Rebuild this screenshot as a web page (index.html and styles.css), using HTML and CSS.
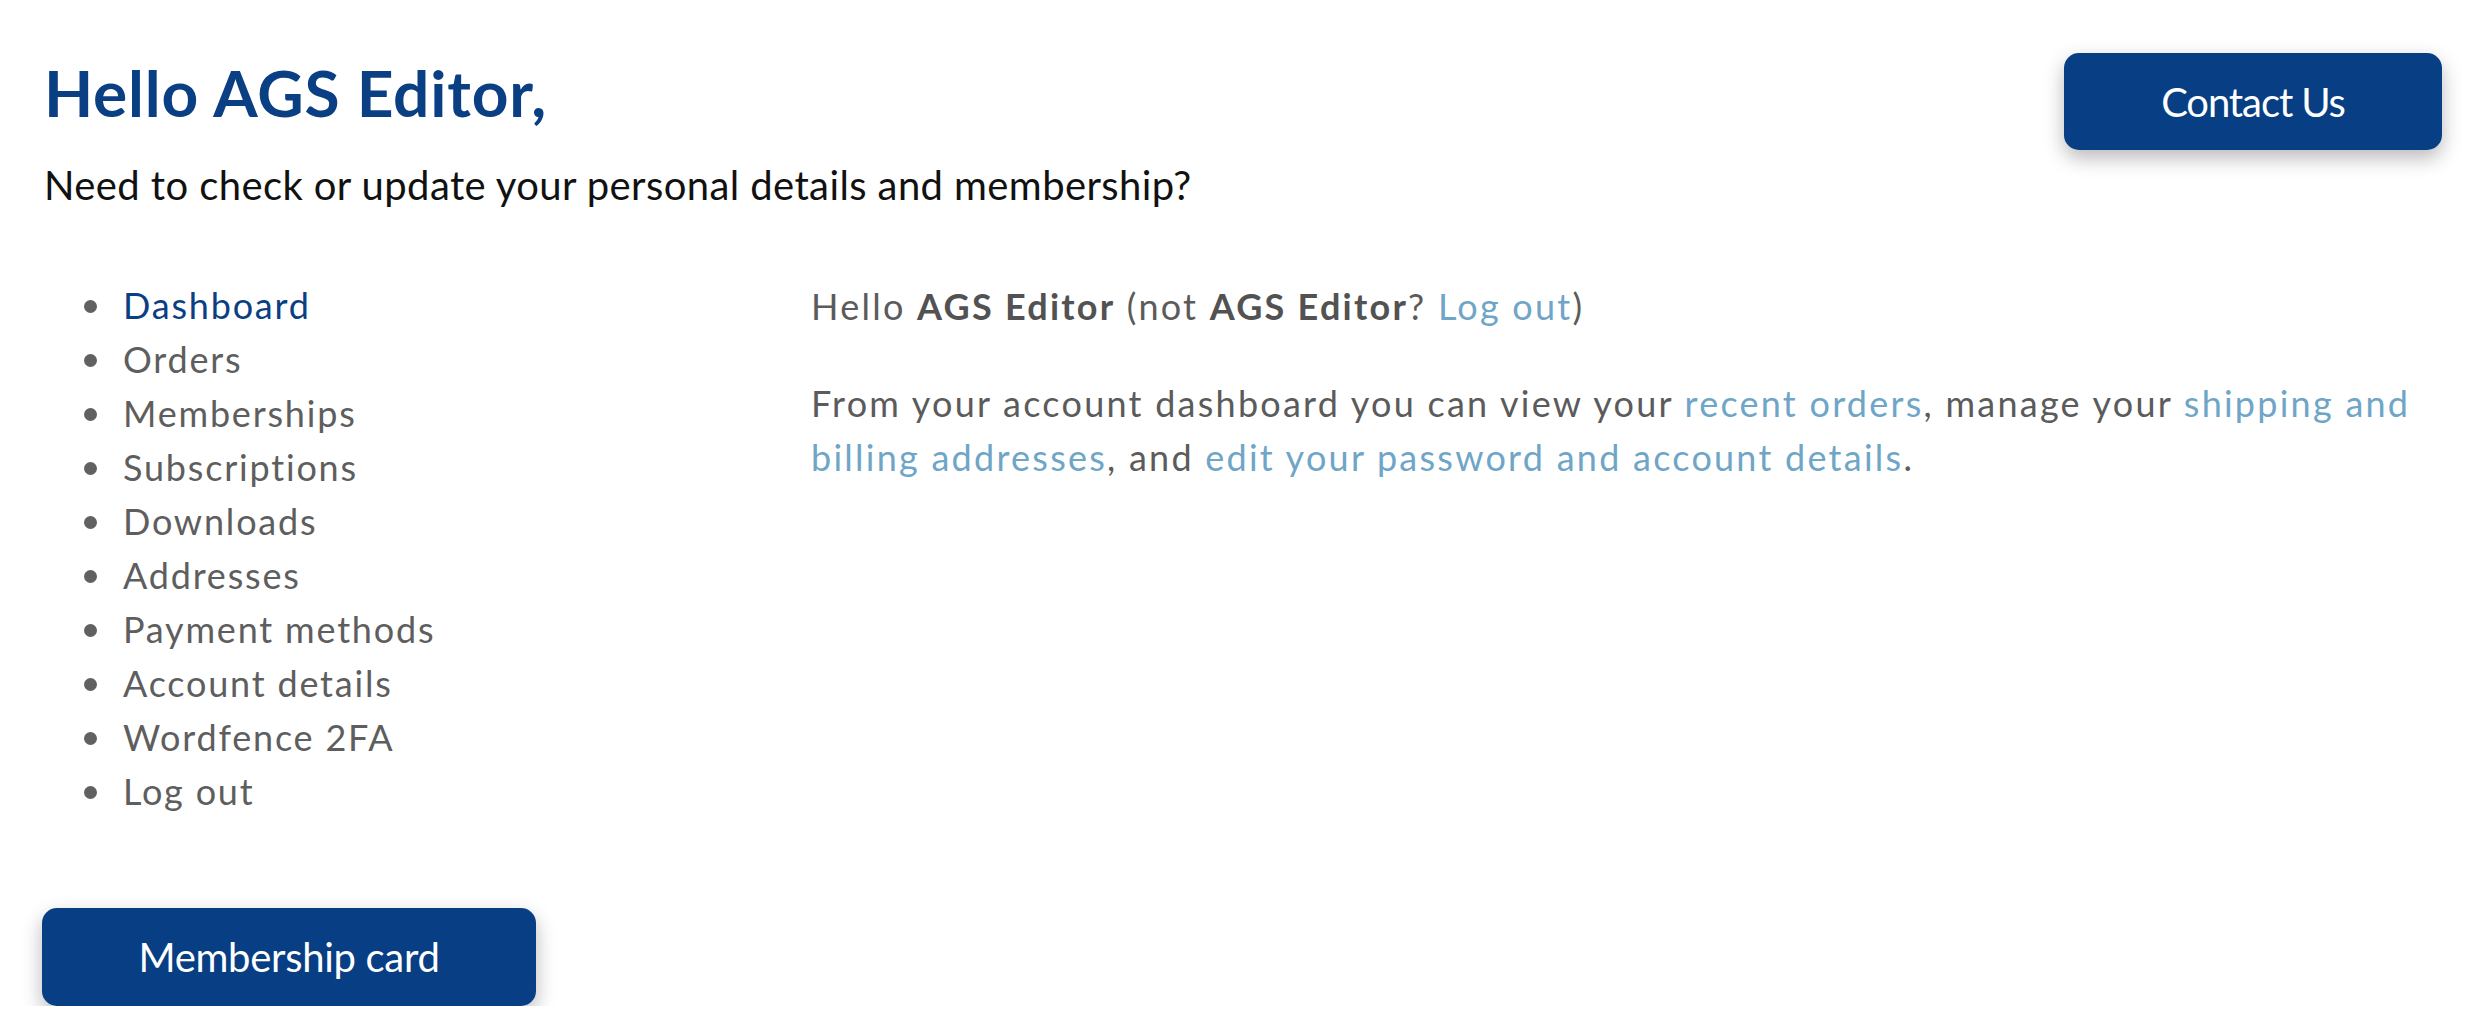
FILE: index.html
```html
<!DOCTYPE html>
<html lang="en">
<head>
<meta charset="utf-8">
<title>My account</title>
<link rel="stylesheet" href="styles.css">
</head>
<body>
<div class="page">
  <header class="top">
    <div class="intro">
      <h1 class="greeting">Hello AGS Editor,</h1>
      <p class="subtitle">Need to check or update your personal details and membership?</p>
    </div>
    <a class="btn btn-contact" href="#">Contact Us</a>
  </header>
  <div class="account">
    <nav class="account-nav">
      <ul class="nav-list">
        <li class="nav-item is-active"><a href="#">Dashboard</a></li>
        <li class="nav-item"><a href="#">Orders</a></li>
        <li class="nav-item"><a href="#">Memberships</a></li>
        <li class="nav-item"><a href="#">Subscriptions</a></li>
        <li class="nav-item"><a href="#">Downloads</a></li>
        <li class="nav-item"><a href="#">Addresses</a></li>
        <li class="nav-item"><a href="#">Payment methods</a></li>
        <li class="nav-item"><a href="#">Account details</a></li>
        <li class="nav-item"><a href="#">Wordfence 2FA</a></li>
        <li class="nav-item"><a href="#">Log out</a></li>
      </ul>
      <a class="btn btn-card" href="#">Membership card</a>
    </nav>
    <div class="account-content">
      <p class="text">Hello <strong>AGS Editor</strong> (not <strong>AGS Editor</strong>? <a class="link" href="#">Log out</a>)</p>
      <p class="text">From your account dashboard you can view your <a class="link" href="#">recent orders</a>, manage your <a class="link" href="#">shipping and billing addresses</a>, and <a class="link" href="#">edit your password and account details</a>.</p>
    </div>
  </div>
</div>
</body>
</html>
```

FILE: styles.css
```css
html, body {
  margin: 0;
  padding: 0;
  background: #ffffff;
}

body {
  font-family: "Lato", "Open Sans", sans-serif;
  color: #5b5b5b;
}

.page {
  padding: 53px 24px 0 42px;
}

.top {
  display: flex;
  justify-content: space-between;
  align-items: flex-start;
}

.intro {
  padding-left: 2px;
}

.greeting {
  margin: 2px 0 0 0;
  font-size: 64px;
  line-height: 76.8px;
  font-weight: 700;
  letter-spacing: 0.8px;
  color: #0b3f84;
}

.subtitle {
  margin: 23px 0 0 0;
  font-size: 40px;
  line-height: 60px;
  letter-spacing: 0.4px;
  color: #111111;
}

.btn {
  display: flex;
  align-items: center;
  justify-content: center;
  background: #073e84;
  color: #ffffff;
  text-decoration: none;
  border-radius: 15px;
  box-shadow: 0 8px 20px rgba(0, 0, 0, 0.28);
  font-size: 40px;
  line-height: 1;
}

.btn-contact {
  width: 378px;
  height: 97px;
  letter-spacing: -1.1px;
}

.btn-card {
  width: 494px;
  height: 98px;
  margin-top: 90px;
  letter-spacing: -0.3px;
}

.account {
  display: grid;
  grid-template-columns: 769px 1fr;
  margin-top: 63px;
}

.nav-list {
  list-style: none;
  margin: 0;
  padding: 0;
}

.nav-item {
  display: flex;
  align-items: center;
  font-size: 36px;
  line-height: 54px;
  letter-spacing: 1.8px;
}

.nav-item::before {
  content: "";
  flex: none;
  width: 13px;
  height: 13px;
  border-radius: 50%;
  background: #616161;
  margin: 4px 26px 0 42px;
}

.nav-item a {
  color: #5e5e5e;
  text-decoration: none;
}

.nav-item.is-active a {
  color: #0b3f84;
}

.account-content {
  padding-top: 1px;
}

.text {
  margin: 0 0 43px 0;
  font-size: 36px;
  line-height: 54px;
  letter-spacing: 2.25px;
  color: #5b5b5b;
}

.text strong {
  color: #525252;
  font-weight: 700;
}

.link {
  color: #6fa5c6;
  text-decoration: none;
}
```
